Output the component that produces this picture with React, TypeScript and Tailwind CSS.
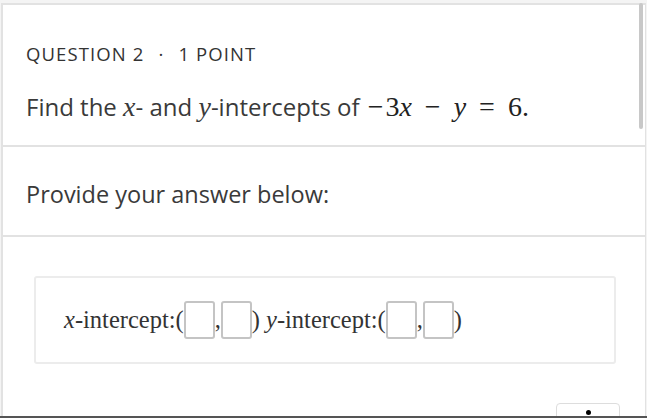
import React from "react";

function Blank() {
  return (
    <span className="inline-block w-[31px] h-[38px] border-2 border-[#c4c4c4] rounded-[3px] bg-white align-middle" />
  );
}

const serif = { fontFamily: "'Liberation Serif', serif" };
const sans = { fontFamily: "'Open Sans', sans-serif" };

export default function App() {
  return (
    <div className="relative w-[647px] h-[418px] overflow-hidden bg-[#f4f4f4] pt-[3px] pl-px">
      <div className="w-[645px] h-[430px] bg-white border-2 border-[#e2e2e2] border-b-0 border-r-[1px] flex flex-col">
        <div className="h-[142px] border-b-2 border-[#e2e2e2] pl-[23px] pt-[36px] text-[#333]">
          <div className="text-[18.5px] tracking-[0.06em] leading-[26px]" style={sans}>
            QUESTION 2<span className="ml-[14px] mr-[14px]">·</span>1 POINT
          </div>
          <div className="mt-[24px] text-[24px] leading-[32px] text-[#3a3a3a]" style={sans}>
            Find the{" "}
            <span className="italic text-[28px]" style={serif}>
              x
            </span>
            - and{" "}
            <span className="italic text-[28px]" style={serif}>
              y
            </span>
            -intercepts of
            <span className="ml-[8px] text-[28px] text-[#222]" style={serif}>
              <span className="mr-[2px]">−</span>3<i>x</i>
              <span className="mx-[13px]">−</span>
              <i>y</i>
              <span className="mx-[13px]">=</span>6.
            </span>
          </div>
        </div>
        <div
          className="h-[90px] border-b-2 border-[#e2e2e2] pl-[23px] pt-[8px] flex items-center text-[23.5px] text-[#3a3a3a]"
          style={sans}
        >
          Provide your answer below:
        </div>
        <div className="pt-[39px] pl-[31px]">
          <div className="w-[582px] h-[88px] border-2 border-[#ececec] rounded-[3px] flex items-center pl-[28px]">
            <div className="text-[24.5px] text-[#333] flex items-center" style={serif}>
              <i>x</i>-intercept:(
              <Blank />
              ,
              <Blank />
              )<span className="ml-[6px]"><i>y</i>-intercept:(</span>
              <Blank />
              ,
              <Blank />)
            </div>
          </div>
        </div>
      </div>
      <div className="absolute left-[639px] top-[3px] w-[4px] h-[126px] bg-[#c8c8c8] rounded-[2px]" />
      <div className="absolute left-[556px] top-[403px] w-[64px] h-[20px] bg-white border border-[#ddd] rounded-[4px] flex justify-center pt-[6px]">
        <span className="w-[5px] h-[5px] rounded-full bg-black" />
      </div>
      <div className="absolute left-0 bottom-0 w-full h-[2px] bg-[#555]" />
    </div>
  );
}
